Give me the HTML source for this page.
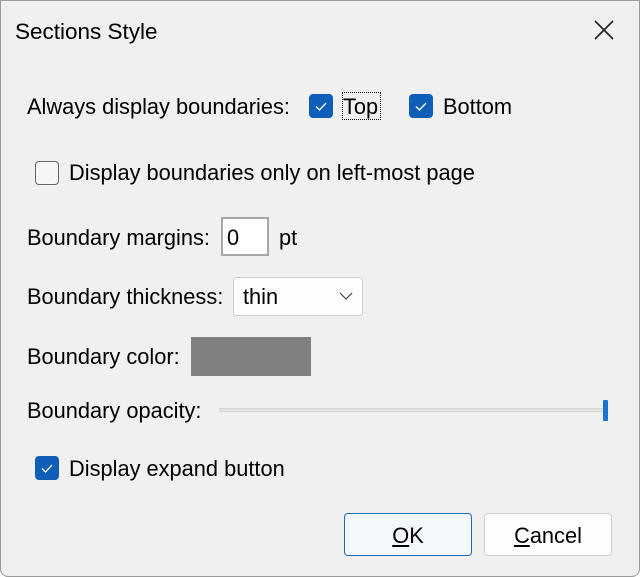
<!DOCTYPE html>
<html><head><style>
*{margin:0;padding:0;box-sizing:border-box}
body{width:640px;height:577px;background:#fff;font-family:"Liberation Sans",sans-serif;font-size:21.8px;color:#000;overflow:hidden}
.win{position:absolute;left:0;top:0;width:640px;height:577px;background:#f0f0f0;border-radius:0 0 8px 8px}
.bd{position:absolute;left:0;top:0;width:640px;height:577px;border:1px solid #9a9a9a;border-radius:0 0 8px 8px;pointer-events:none}
.a{position:absolute;white-space:nowrap;line-height:26px}
.cb{position:absolute;width:24px;height:24px;border-radius:4px;background:#0f5fb8}
.cb svg{position:absolute;left:0;top:0}
.cbu{position:absolute;width:24px;height:24px;border-radius:4px;border:1.5px solid #666;background:#f6f6f6}
.btn{position:absolute;height:43px;border-radius:4px;text-align:center;line-height:43px}
</style></head><body><div class="win">
<div class="a" style="left:15px;top:19px;font-size:22.5px">Sections Style</div>
<svg class="a" style="left:594px;top:20px" width="20" height="20"><path d="M1 1L19 19M19 1L1 19" stroke="#222" stroke-width="1.6"/></svg>

<div class="a" style="left:27px;top:94px">Always display boundaries:</div>
<div class="cb" style="left:309px;top:94px"><svg width="24" height="24"><path d="M7 12.5l3.5 3.5 6.5-7" stroke="#fff" stroke-width="1.3" fill="none"/></svg></div>
<div class="a" style="left:343px;top:94px">Top</div>
<div style="position:absolute;left:342px;top:92px;width:39px;height:28px;border:1px dotted #000"></div>
<div class="cb" style="left:409px;top:94px"><svg width="24" height="24"><path d="M7 12.5l3.5 3.5 6.5-7" stroke="#fff" stroke-width="1.3" fill="none"/></svg></div>
<div class="a" style="left:443px;top:94px">Bottom</div>

<div class="cbu" style="left:35px;top:161px"></div>
<div class="a" style="left:69px;top:160px">Display boundaries only on left-most page</div>

<div class="a" style="left:27px;top:225px">Boundary margins:</div>
<div style="position:absolute;left:221px;top:217px;width:48px;height:39px;border:2px solid #a8a8a8;background:#fff"></div>
<div class="a" style="left:227px;top:225px">0</div>
<div class="a" style="left:279px;top:225px">pt</div>

<div class="a" style="left:27px;top:284px">Boundary thickness:</div>
<div style="position:absolute;left:233px;top:277px;width:130px;height:39px;border:1px solid #ccc;border-radius:3px;background:#fdfdfd"></div>
<div class="a" style="left:243px;top:284px">thin</div>
<svg class="a" style="left:339px;top:292px" width="14" height="9"><path d="M1 1l6 6 6-6" stroke="#333" stroke-width="1.1" fill="none"/></svg>

<div class="a" style="left:27px;top:344px">Boundary color:</div>
<div style="position:absolute;left:191px;top:337px;width:120px;height:39px;background:#808080"></div>

<div class="a" style="left:27px;top:398px">Boundary opacity:</div>
<div style="position:absolute;left:219px;top:408px;width:388px;height:4px;background:#e4e4e4;border:1px solid #d4d4d4;border-radius:2px"></div>
<div style="position:absolute;left:603px;top:400px;width:5px;height:21px;background:#1a73d4;border-radius:1px"></div>

<div class="cb" style="left:35px;top:456px"><svg width="24" height="24"><path d="M7 12.5l3.5 3.5 6.5-7" stroke="#fff" stroke-width="1.3" fill="none"/></svg></div>
<div class="a" style="left:69px;top:456px">Display expand button</div>

<div class="btn" style="left:344px;top:513px;width:128px;background:#f4f7fb;border:1.5px solid #1a6cbd"><u>O</u>K</div>
<div class="btn" style="left:484px;top:513px;width:128px;background:#fdfdfd;border:1px solid #d0d0d0"><u>C</u>ancel</div>
</div><div class="bd"></div></body></html>
